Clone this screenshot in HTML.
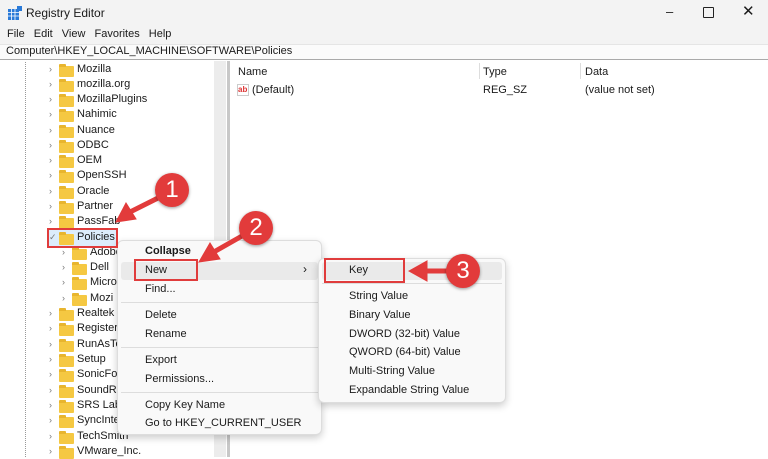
<!DOCTYPE html><html><head><style>
*{margin:0;padding:0;box-sizing:border-box}
body{width:768px;height:457px;overflow:hidden;background:#fff;font-family:"Liberation Sans",sans-serif;font-size:11px;color:#1a1a1a;position:relative}
.a{position:absolute;white-space:nowrap}
.f{position:absolute;width:15px;height:11px;background:#f5c842;border-radius:1px}
.f:before{content:"";position:absolute;left:0;top:-2px;width:7px;height:3px;background:#e8b52e;border-radius:1px 1px 0 0}
.ch{position:absolute;font-size:9px;color:#777}
.m{position:absolute;left:145px}
.s{position:absolute;left:349px}
.sep{position:absolute;height:1px;background:#ddd}
.rb{position:absolute;border:2px solid #e03c3c}
.c{position:absolute;width:34px;height:34px;border-radius:50%;background:#e23b3b;color:#fff;font-size:24px;text-align:center;line-height:34px;box-shadow:0 1px 3px rgba(0,0,0,.4)}
</style></head><body>
<div class="a" style="left:0;top:0;width:768px;height:60px;background:#f3f3f3"></div>
<svg class="a" style="left:8px;top:6px" width="14" height="14"><rect x="0" y="3" width="11" height="11" fill="#2a7ad8"/><path d="M0 6.5h11M0 10h11M3.5 3v11M7 3v11" stroke="#fff" stroke-width=".8"/><rect x="9" y="0" width="5" height="5" fill="#2a7ad8"/></svg>
<div class="a" style="left:26px;top:6px;font-size:12px">Registry Editor</div>
<div class="a" style="left:666px;top:4px;font-size:13px">–</div>
<div class="a" style="left:703px;top:7px;width:11px;height:11px;border:1.3px solid #222;border-radius:1px"></div>
<div class="a" style="left:742px;top:2px;font-size:15px">✕</div>
<div class="a" style="left:7px;top:28px;font-size:11px;word-spacing:6px">File Edit View Favorites Help</div>
<div class="a" style="left:0;top:44px;width:768px;height:16px;background:#fbfbfb;border-top:1px solid #e5e5e5;border-bottom:1px solid #aaa"></div>
<div class="a" style="left:6px;top:45px;font-size:11px">Computer\HKEY_LOCAL_MACHINE\SOFTWARE\Policies</div>
<div class="a" style="left:25px;top:62px;height:395px;border-left:1px dotted #999"></div>
<div class="a" style="left:214px;top:61px;width:12px;height:396px;background:#ececec"></div>
<div class="a" style="left:227px;top:61px;width:3px;height:396px;background:#c8c8c8"></div>
<div class="a" style="left:238px;top:66px">Name</div>
<div class="a" style="left:483px;top:66px">Type</div>
<div class="a" style="left:479px;top:63px;height:16px;border-left:1px solid #ddd"></div>
<div class="a" style="left:580px;top:63px;height:16px;border-left:1px solid #ddd"></div>
<div class="a" style="left:585px;top:66px">Data</div>
<div class="a" style="left:237px;top:84px;width:12px;height:12px;border:1px solid #ccc;color:#d33;font-size:8px;font-weight:bold;line-height:10px">ab</div>
<div class="a" style="left:252px;top:84px">(Default)</div>
<div class="a" style="left:483px;top:84px">REG_SZ</div>
<div class="a" style="left:585px;top:84px">(value not set)</div>
<div class="a" style="left:48px;top:230px;width:70px;height:17px;background:#dcecfb"></div>
<div id="t"></div>
<script>
var r=[["Mozilla",70],["mozilla.org",85],["MozillaPlugins",100],["Nahimic",115],["Nuance",131],["ODBC",146],["OEM",161],["OpenSSH",176],["Oracle",192],["Partner",207],["PassFab",222],["Policies",238],["Adobe",253,1],["Dell",268,1],["Micro",283,1],["Mozi",299,1],["Realtek",314],["Register",329],["RunAsTo",345],["Setup",360],["SonicFo",375],["SoundR",391],["SRS Lab",406],["SyncInte",421],["TechSmith",437],["VMware_Inc.",452]];
var h="";r.forEach(function(e){var x=e[2]?72:59,y=e[1];
h+='<div class="ch" style="left:'+(x-10)+'px;top:'+(y-6)+'px">'+(e[0]=="Policies"?"✓":"›")+'</div><div class="f" style="left:'+x+'px;top:'+(y-4)+'px"></div><div class="a" style="left:'+(x+18)+'px;top:'+(y-7)+'px">'+e[0]+'</div>';});
document.getElementById("t").innerHTML=h;
</script>
<div class="a" style="left:117px;top:240px;width:205px;height:195px;background:#f9f9f9;border:1px solid #ddd;border-radius:6px;box-shadow:0 3px 8px rgba(0,0,0,.2)"></div>
<div class="m" style="top:245px;font-weight:bold">Collapse</div>
<div class="a" style="left:121px;top:262px;width:197px;height:18px;background:#eaeaea;border-radius:3px"></div>
<div class="m" style="top:264px">New</div><div class="a" style="left:303px;top:262px;font-size:12px">›</div>
<div class="m" style="top:283px">Find...</div>
<div class="sep" style="left:121px;top:302px;width:197px"></div>
<div class="m" style="top:309px">Delete</div>
<div class="m" style="top:328px">Rename</div>
<div class="sep" style="left:121px;top:347px;width:197px"></div>
<div class="m" style="top:354px">Export</div>
<div class="m" style="top:373px">Permissions...</div>
<div class="sep" style="left:121px;top:392px;width:197px"></div>
<div class="m" style="top:399px">Copy Key Name</div>
<div class="m" style="top:417px">Go to HKEY_CURRENT_USER</div>
<div class="a" style="left:318px;top:258px;width:188px;height:145px;background:#f9f9f9;border:1px solid #ddd;border-radius:6px;box-shadow:0 3px 8px rgba(0,0,0,.2)"></div>
<div class="a" style="left:322px;top:262px;width:180px;height:18px;background:#eaeaea;border-radius:3px"></div>
<div class="s" style="top:264px">Key</div>
<div class="sep" style="left:322px;top:283px;width:180px"></div>
<div class="s" style="top:290px">String Value</div>
<div class="s" style="top:309px">Binary Value</div>
<div class="s" style="top:328px">DWORD (32-bit) Value</div>
<div class="s" style="top:346px">QWORD (64-bit) Value</div>
<div class="s" style="top:365px">Multi-String Value</div>
<div class="s" style="top:384px">Expandable String Value</div>
<div class="rb" style="left:47px;top:228px;width:71px;height:20px"></div>
<div class="rb" style="left:134px;top:259px;width:64px;height:22px"></div>
<div class="rb" style="left:324px;top:258px;width:81px;height:25px"></div>
<svg class="a" style="left:0;top:0" width="768" height="457">
<g fill="#e23b3b" stroke="#e23b3b" stroke-width="5" stroke-linecap="round">
<line x1="158" y1="198" x2="128" y2="213"/><polygon points="116,222 126,203 136,219" stroke-width="1"/>
<line x1="242" y1="236" x2="212" y2="253"/><polygon points="199,262 210,243 220,259" stroke-width="1"/>
<line x1="448" y1="271" x2="425" y2="271"/><polygon points="409,271 427,261 427,281" stroke-width="1"/>
</g></svg>
<div class="c" style="left:155px;top:173px">1</div>
<div class="c" style="left:239px;top:211px">2</div>
<div class="c" style="left:446px;top:254px">3</div>
</body></html>
